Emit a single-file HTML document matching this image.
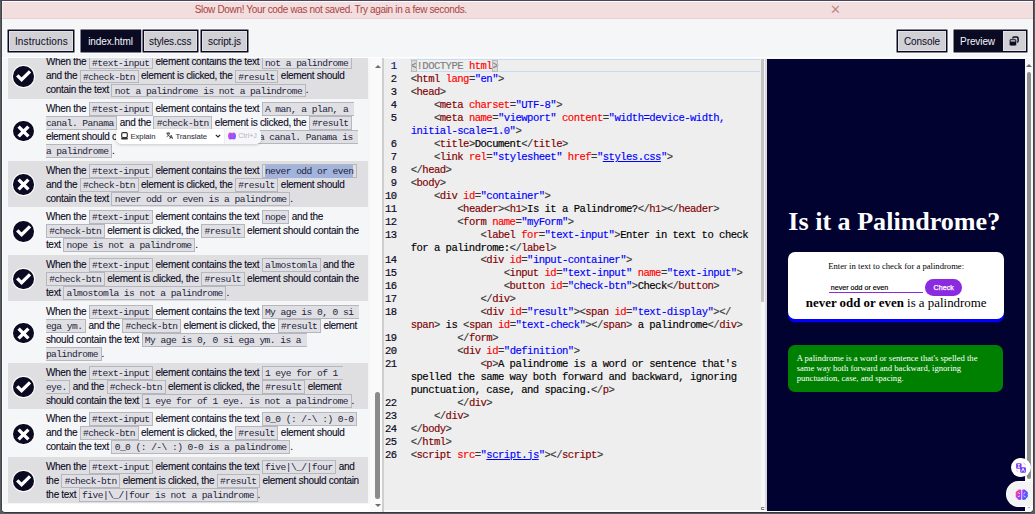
<!DOCTYPE html>
<html><head><meta charset="utf-8">
<style>
*{box-sizing:border-box;margin:0;padding:0}
html,body{width:1035px;height:514px;overflow:hidden;background:#585b61}
body{position:relative;font-family:"Liberation Sans",sans-serif;color:#0a0a23}
#app{position:absolute;left:2px;top:1px;width:1030.7px;height:510.5px;background:#f5f6f7;overflow:hidden;border-radius:0 0 4px 4px;box-shadow:-0.8px 0 0 #3a3c41,0.8px 0 0 #3a3c41,0 1px 0 #36373c}
#topf{position:absolute;left:0;top:0;width:1035px;height:1px;background:#4e435a}
#banner{position:absolute;left:0;top:0;width:1031px;height:18px;background:#f2dede;border-top:1px solid #fff;border-left:1.5px solid #f6ede8;border-bottom:1px solid #ead0d0}
#banner .msg{position:absolute;left:191.7px;top:2.3px;font-size:10px;letter-spacing:-0.34px;color:#a94442;white-space:nowrap}
#banner .x{position:absolute;left:827px;top:0px;font-size:13px;color:#c08a8a}
.btn{position:absolute;top:29.3px;height:22.1px;border:1px solid #0a0a23;box-shadow:0 0 0 0.5px #0a0a23,0 0 0 1.5px #fff,inset 0 0 0 1px #e2e2e6;background:#d0d0d5;color:#0a0a23;font-size:10px;letter-spacing:-0.1px;text-align:center;line-height:22px;white-space:nowrap}
.pvi{position:absolute;left:48px;top:0;width:23.3px;height:20.1px;background:#d0d0d5;box-shadow:inset 0 0 0 1px #e2e2e6}
.btn.dark{background:#0a0a23;color:#f5f6f7;box-shadow:0 0 0 0.5px #0a0a23,0 0 0 1.5px #fff}
#left{position:absolute;left:0;top:56px;width:380px;height:455px;background:#f5f6f7;overflow:hidden}
#list{position:absolute;left:0;top:1.2px;width:368px;height:450px;overflow:hidden}
.row{position:absolute;left:5.6px;width:360.3px;font-size:10px;line-height:14px;letter-spacing:-0.3px;white-space:nowrap;-webkit-text-stroke:0.1px #0a0a23}
code{-webkit-text-stroke:0 transparent}
.row.g{background:#dfdfe2}
.ln{position:absolute;left:38.3px;height:14px;margin-top:0.6px}
.ic{position:absolute;left:5.7px;margin-top:1.2px;width:20.5px;height:20.5px;border-radius:50%;background:#0a0a23;box-shadow:0 0 0 1px #fff}
.ic svg{position:absolute;left:0;top:0}
code{font-family:"Liberation Mono",monospace;font-size:9.6px;letter-spacing:-0.55px;background:#e0e0e4;border:1px solid #b6b6be;padding:0.8px 2.6px 0 2.3px;color:#23233a}
code.o{border-right:0;padding-right:5.6px}
code.m{border-left:0;padding-left:0}
.sel{background:#a2b4dc;padding:1px 0 1px 0}
#lsb{position:absolute;left:368px;top:57px;width:12px;height:454px;background:#fafafa}
#lsb .up{position:absolute;left:4.5px;top:7px;width:0;height:0;border-left:3px solid transparent;border-right:3px solid transparent;border-bottom:3.5px solid #6d6d6d}
#lsb .dn{position:absolute;left:4.5px;top:445.5px;width:0;height:0;border-left:3px solid transparent;border-right:3px solid transparent;border-top:3.5px solid #6d6d6d}
#lsb .th{position:absolute;left:5px;top:334px;width:5px;height:107px;border-radius:3px;background:#8a8a8a}
#div1{position:absolute;left:379.8px;top:57px;width:2.2px;height:454px;background:#cfcfd2}
#editor{position:absolute;left:382px;top:57.5px;width:376.7px;height:451.6px;background:#eeeeee;overflow:hidden;font-family:"Liberation Mono",monospace;font-size:10.6px;letter-spacing:-0.54px}
.lnum{position:absolute;left:0;width:12.5px;text-align:right;height:12.94px;line-height:12.94px;margin-top:1.9px;color:#0a0a23;font-size:10.5px;letter-spacing:-0.6px;-webkit-text-stroke:0.2px currentColor}
.cl{position:absolute;left:26.7px;height:12.94px;line-height:12.94px;margin-top:1.9px;-webkit-text-stroke:0.15px currentColor;white-space:pre;color:#000}
#curline{position:absolute;left:26px;top:0.8px;width:350px;height:12.4px;border-top:1px solid #c6dcf2;border-bottom:1px solid #c6dcf2}
#rtrack{position:absolute;left:760px;top:57.5px;width:2.5px;height:453.5px;background:#f6f6f6}
#ruler{position:absolute;left:758.9px;top:57.5px;width:3px;height:243.2px;background:#c3c3c3}
#div2{position:absolute;left:762.5px;top:57.5px;width:2.5px;height:453.5px;background:#d9d9de}
.kd{color:#383838}.kt{color:#800000}.ka{color:#ff0000}.kv{color:#0000ff}.km{color:#808080}.kl{color:#0000ff;text-decoration:underline}
.kdt{color:#808080;background:#dcdcdc;outline:1px solid #b9b9b9;outline-offset:-1px}
#preview{position:absolute;left:765px;top:57.5px;width:258px;height:452.4px;background:#010230;overflow:hidden;font-family:"Liberation Serif",serif;color:#fff}
#preview h1{position:absolute;left:0;width:258.5px;top:148px;margin-left:-2px;text-align:center;font-size:26.1px;font-weight:bold;line-height:30px;white-space:nowrap}
#card{position:absolute;left:21.4px;top:193.6px;width:215.6px;height:66.7px;background:#fff;border-radius:7px;box-shadow:0 3.3px 0 #0000ff;color:#000}
#card .lbl{position:absolute;left:0;width:100%;top:9px;text-align:center;font-size:8.65px;white-space:nowrap}
#card .inp{position:absolute;left:41px;top:31px;width:93.4px;height:10.2px;border-bottom:1.6px solid #8a2be2;font-family:"Liberation Sans",sans-serif;font-size:7.13px;line-height:11.6px;-webkit-text-stroke:0.15px #000;padding-left:1.4px;white-space:nowrap}
#card .chk{position:absolute;left:136.7px;top:27.3px;width:37.3px;height:16.6px;border-radius:8.3px;background:#8a2be2;color:#fff;font-family:"Liberation Sans",sans-serif;font-size:7.2px;-webkit-text-stroke:0.25px #fff;line-height:17.2px;text-align:center}
#card .res{position:absolute;left:0;width:100%;top:43.2px;text-align:center;font-size:12.9px;line-height:16px;white-space:nowrap}
#def{position:absolute;left:21.2px;top:286.5px;width:215.1px;height:46.5px;background:#008000;border-radius:7px;font-size:8.6px;line-height:9.8px;padding:9.4px 0 0 8.5px;white-space:nowrap}
#psb{position:absolute;left:1023px;top:57.5px;width:8px;height:453.5px;background:#f7f7f7}
#psb .up{position:absolute;left:1px;top:5.9px;width:0;height:0;border-left:3px solid transparent;border-right:3px solid transparent;border-bottom:3.5px solid #6d6d6d}
#psb .th{position:absolute;left:1.6px;top:13.3px;width:4.2px;height:407.7px;border-radius:3px;background:#8f8f8f}
#psb .dn{position:absolute;left:1px;top:446px;width:0;height:0;border-left:3px solid transparent;border-right:3px solid transparent;border-top:3.5px solid #6d6d6d}
#tip{position:absolute;left:113.8px;top:127.6px;width:145px;height:15.1px;background:#fff;border-radius:5px;box-shadow:0 1px 3px rgba(0,0,0,0.18);font-family:"Liberation Sans",sans-serif;font-size:7.7px;color:#3a3a48;-webkit-text-stroke:0.1px #3a3a48;white-space:nowrap}
#tip .r{position:absolute;left:107.8px;top:0;width:37.2px;height:15.1px;background:#f7f7f9;border-radius:0 5px 5px 0;border-left:1px solid #eeeef2}
#tip span{position:absolute;top:0;line-height:15.6px}
#tip svg{position:absolute}
#pvicon{position:absolute;left:1000.4px;top:28.9px;width:24.7px;height:24px}
#tbtn{position:absolute;left:1009.1px;top:456.8px;width:19.6px;height:19px;border-radius:50%;background:#fff;box-shadow:0 0 2px rgba(0,0,0,0.25)}
#bbtn{position:absolute;left:1005.3px;top:481.4px;width:40px;height:23.5px;border-radius:11.75px 0 0 11.75px;background:#f3f3f5;box-shadow:0 0 0 1px #fff}
#lwhite{position:absolute;left:0;top:0;width:1.2px;height:455px;background:#fff}
#bwhite{position:absolute;left:0;top:447px;width:368px;height:10px;background:#fff}
#wline{position:absolute;left:0;top:55.6px;width:1031px;height:1.4px;background:#fff}
#ebot{position:absolute;left:382px;top:509.1px;width:383px;height:2px;background:#fbfbfb}
#cicon{position:absolute;left:759px;top:505.6px;width:3.6px;height:3.6px;border:1.1px solid #777;border-right-color:transparent;border-radius:50%}
</style></head>
<body>
<div id="topf"></div>
<div id="app">
  <div id="banner"><span class="msg">Slow Down! Your code was not saved. Try again in a few seconds.</span><span class="x">&#x2715;</span></div>
  <div class="btn" style="left:6.3px;width:66.2px;letter-spacing:0.15px">Instructions</div>
  <div class="btn dark" style="left:78.5px;width:60px">index.html</div>
  <div class="btn" style="left:140.8px;width:54.9px">styles.css</div>
  <div class="btn" style="left:198.7px;width:47.6px">script.js</div>
  <div class="btn" style="left:894.8px;width:50.4px">Console</div>
  <div class="btn dark" style="left:951.5px;width:73.3px;text-align:left;padding-left:5.6px"><div class="pvi"></div>Preview</div>
<div id="left"><div id="lwhite"></div><div id="bwhite"></div><div id="list">
<div class="row g" style="top:-5.9px;height:46.3px"><div class="ic" style="top:12.6px"><svg width="21" height="21" viewBox="0 0 21 21"><path d="M4.2 9.3 L8.6 13.7 L17 5.3" fill="none" stroke="#fff" stroke-width="3.3"/></svg></div>
<div class="ln" style="top:2.5px">When the <code>#text-input</code> element contains the text <code>not a palindrome</code></div>
<div class="ln" style="top:16.5px">and the <code>#check-btn</code> element is clicked, the <code>#result</code> element should</div>
<div class="ln" style="top:30.5px">contain the text <code>not a palindrome is not a palindrome</code>.</div>
</div>
<div class="row" style="top:41.0px;height:61.3px"><div class="ic" style="top:20.2px"><svg width="21" height="21" viewBox="0 0 21 21"><path d="M5.6 5.6 L15.4 15.4 M15.4 5.6 L5.6 15.4" fill="none" stroke="#fff" stroke-width="3.4"/></svg></div>
<div class="ln" style="top:2.5px">When the <code>#test-input</code> element contains the text <code class="o">A man, a plan, a</code></div>
<div class="ln" style="top:16.5px"><code class="m">canal. Panama</code> and the <code>#check-btn</code> element is clicked, the <code>#result</code></div>
<div class="ln" style="top:30.5px">element should contain the text <code class="o">A man, a plan, a canal. Panama is</code></div>
<div class="ln" style="top:44.5px"><code class="m">a palindrome</code>.</div>
</div>
<div class="row g" style="top:102.5px;height:46.2px"><div class="ic" style="top:12.6px"><svg width="21" height="21" viewBox="0 0 21 21"><path d="M5.6 5.6 L15.4 15.4 M15.4 5.6 L5.6 15.4" fill="none" stroke="#fff" stroke-width="3.4"/></svg></div>
<div class="ln" style="top:2.5px">When the <code>#text-input</code> element contains the text <code><span class="sel">never odd or even</span></code></div>
<div class="ln" style="top:16.5px">and the <code>#check-btn</code> element is clicked, the <code>#result</code> element should</div>
<div class="ln" style="top:30.5px">contain the text <code>never odd or even is a palindrome</code>.</div>
</div>
<div class="row" style="top:148.7px;height:47.9px"><div class="ic" style="top:13.4px"><svg width="21" height="21" viewBox="0 0 21 21"><path d="M4.2 9.3 L8.6 13.7 L17 5.3" fill="none" stroke="#fff" stroke-width="3.3"/></svg></div>
<div class="ln" style="top:2.5px">When the <code>#text-input</code> element contains the text <code>nope</code> and the</div>
<div class="ln" style="top:16.5px"><code>#check-btn</code> element is clicked, the <code>#result</code> element should contain the</div>
<div class="ln" style="top:30.5px">text <code>nope is not a palindrome</code>.</div>
</div>
<div class="row g" style="top:196.6px;height:46.6px"><div class="ic" style="top:12.8px"><svg width="21" height="21" viewBox="0 0 21 21"><path d="M4.2 9.3 L8.6 13.7 L17 5.3" fill="none" stroke="#fff" stroke-width="3.3"/></svg></div>
<div class="ln" style="top:2.5px">When the <code>#text-input</code> element contains the text <code>almostomla</code> and the</div>
<div class="ln" style="top:16.5px"><code>#check-btn</code> element is clicked, the <code>#result</code> element should contain the</div>
<div class="ln" style="top:30.5px">text <code>almostomla is not a palindrome</code>.</div>
</div>
<div class="row" style="top:243.5px;height:61.2px"><div class="ic" style="top:20.1px"><svg width="21" height="21" viewBox="0 0 21 21"><path d="M5.6 5.6 L15.4 15.4 M15.4 5.6 L5.6 15.4" fill="none" stroke="#fff" stroke-width="3.4"/></svg></div>
<div class="ln" style="top:2.5px">When the <code>#text-input</code> element contains the text <code class="o">My age is 0, 0 si</code></div>
<div class="ln" style="top:16.5px"><code class="m">ega ym.</code> and the <code>#check-btn</code> element is clicked, the <code>#result</code> element</div>
<div class="ln" style="top:30.5px">should contain the text <code class="o">My age is 0, 0 si ega ym. is a</code></div>
<div class="ln" style="top:44.5px"><code class="m">palindrome</code>.</div>
</div>
<div class="row g" style="top:304.7px;height:46.1px"><div class="ic" style="top:12.5px"><svg width="21" height="21" viewBox="0 0 21 21"><path d="M4.2 9.3 L8.6 13.7 L17 5.3" fill="none" stroke="#fff" stroke-width="3.3"/></svg></div>
<div class="ln" style="top:2.5px">When the <code>#text-input</code> element contains the text <code class="o">1 eye for of 1</code></div>
<div class="ln" style="top:16.5px"><code class="m">eye.</code> and the <code>#check-btn</code> element is clicked, the <code>#result</code> element</div>
<div class="ln" style="top:30.5px">should contain the text <code>1 eye for of 1 eye. is not a palindrome</code>.</div>
</div>
<div class="row" style="top:350.8px;height:48.1px"><div class="ic" style="top:13.6px"><svg width="21" height="21" viewBox="0 0 21 21"><path d="M5.6 5.6 L15.4 15.4 M15.4 5.6 L5.6 15.4" fill="none" stroke="#fff" stroke-width="3.4"/></svg></div>
<div class="ln" style="top:2.5px">When the <code>#text-input</code> element contains the text <code>0_0 (: /-&#92; :) 0-0</code></div>
<div class="ln" style="top:16.5px">and the <code>#check-btn</code> element is clicked, the <code>#result</code> element should</div>
<div class="ln" style="top:30.5px">contain the text <code>0_0 (: /-&#92; :) 0-0 is a palindrome</code>.</div>
</div>
<div class="row g" style="top:398.9px;height:46.2px"><div class="ic" style="top:12.6px"><svg width="21" height="21" viewBox="0 0 21 21"><path d="M4.2 9.3 L8.6 13.7 L17 5.3" fill="none" stroke="#fff" stroke-width="3.3"/></svg></div>
<div class="ln" style="top:2.5px">When the <code>#text-input</code> element contains the text <code>five|&#92;_/|four</code> and</div>
<div class="ln" style="top:16.5px">the <code>#check-btn</code> element is clicked, the <code>#result</code> element should contain</div>
<div class="ln" style="top:30.5px">the text <code>five|&#92;_/|four is not a palindrome</code>.</div>
</div>
</div></div>
<div id="lsb"><div class="up"></div><div class="th"></div><div class="dn"></div></div><div id="div1"></div>
<div id="editor"><div id="curline"></div><div class="lnum" style="top:0.00px;color:#0b216f">1</div><div class="cl" style="top:0.00px"><span class="kdt">&lt;</span><span class="km">!DOCTYPE </span><span class="ka">html</span><span class="kdt">&gt;</span></div>
<div class="lnum" style="top:12.94px">2</div><div class="cl" style="top:12.94px"><span class="kd">&lt;</span><span class="kt">html</span> <span class="ka">lang</span><span class="kd">=</span><span class="kv">"en"</span><span class="kd">&gt;</span></div>
<div class="lnum" style="top:25.88px">3</div><div class="cl" style="top:25.88px"><span class="kd">&lt;</span><span class="kt">head</span><span class="kd">&gt;</span></div>
<div class="lnum" style="top:38.82px">4</div><div class="cl" style="top:38.82px">    <span class="kd">&lt;</span><span class="kt">meta</span> <span class="ka">charset</span><span class="kd">=</span><span class="kv">"UTF-8"</span><span class="kd">&gt;</span></div>
<div class="lnum" style="top:51.76px">5</div><div class="cl" style="top:51.76px">    <span class="kd">&lt;</span><span class="kt">meta</span> <span class="ka">name</span><span class="kd">=</span><span class="kv">"viewport"</span> <span class="ka">content</span><span class="kd">=</span><span class="kv">"width=device-width,</span></div>
<div class="cl" style="top:64.70px"><span class="kv">initial-scale=1.0"</span><span class="kd">&gt;</span></div>
<div class="lnum" style="top:77.64px">6</div><div class="cl" style="top:77.64px">    <span class="kd">&lt;</span><span class="kt">title</span><span class="kd">&gt;</span>Document<span class="kd">&lt;/</span><span class="kt">title</span><span class="kd">&gt;</span></div>
<div class="lnum" style="top:90.58px">7</div><div class="cl" style="top:90.58px">    <span class="kd">&lt;</span><span class="kt">link</span> <span class="ka">rel</span><span class="kd">=</span><span class="kv">"stylesheet"</span> <span class="ka">href</span><span class="kd">=</span><span class="kv">"</span><span class="kl">styles.css</span><span class="kv">"</span><span class="kd">&gt;</span></div>
<div class="lnum" style="top:103.52px">8</div><div class="cl" style="top:103.52px"><span class="kd">&lt;/</span><span class="kt">head</span><span class="kd">&gt;</span></div>
<div class="lnum" style="top:116.46px">9</div><div class="cl" style="top:116.46px"><span class="kd">&lt;</span><span class="kt">body</span><span class="kd">&gt;</span></div>
<div class="lnum" style="top:129.40px">10</div><div class="cl" style="top:129.40px">    <span class="kd">&lt;</span><span class="kt">div</span> <span class="ka">id</span><span class="kd">=</span><span class="kv">"container"</span><span class="kd">&gt;</span></div>
<div class="lnum" style="top:142.34px">11</div><div class="cl" style="top:142.34px">        <span class="kd">&lt;</span><span class="kt">header</span><span class="kd">&gt;</span><span class="kd">&lt;</span><span class="kt">h1</span><span class="kd">&gt;</span>Is it a Palindrome?<span class="kd">&lt;/</span><span class="kt">h1</span><span class="kd">&gt;</span><span class="kd">&lt;/</span><span class="kt">header</span><span class="kd">&gt;</span></div>
<div class="lnum" style="top:155.28px">12</div><div class="cl" style="top:155.28px">        <span class="kd">&lt;</span><span class="kt">form</span> <span class="ka">name</span><span class="kd">=</span><span class="kv">"myForm"</span><span class="kd">&gt;</span></div>
<div class="lnum" style="top:168.22px">13</div><div class="cl" style="top:168.22px">            <span class="kd">&lt;</span><span class="kt">label</span> <span class="ka">for</span><span class="kd">=</span><span class="kv">"text-input"</span><span class="kd">&gt;</span>Enter in text to check</div>
<div class="cl" style="top:181.16px">for a palindrome:<span class="kd">&lt;/</span><span class="kt">label</span><span class="kd">&gt;</span></div>
<div class="lnum" style="top:194.10px">14</div><div class="cl" style="top:194.10px">            <span class="kd">&lt;</span><span class="kt">div</span> <span class="ka">id</span><span class="kd">=</span><span class="kv">"input-container"</span><span class="kd">&gt;</span></div>
<div class="lnum" style="top:207.04px">15</div><div class="cl" style="top:207.04px">                <span class="kd">&lt;</span><span class="kt">input</span> <span class="ka">id</span><span class="kd">=</span><span class="kv">"text-input"</span> <span class="ka">name</span><span class="kd">=</span><span class="kv">"text-input"</span><span class="kd">&gt;</span></div>
<div class="lnum" style="top:219.98px">16</div><div class="cl" style="top:219.98px">                <span class="kd">&lt;</span><span class="kt">button</span> <span class="ka">id</span><span class="kd">=</span><span class="kv">"check-btn"</span><span class="kd">&gt;</span>Check<span class="kd">&lt;/</span><span class="kt">button</span><span class="kd">&gt;</span></div>
<div class="lnum" style="top:232.92px">17</div><div class="cl" style="top:232.92px">            <span class="kd">&lt;/</span><span class="kt">div</span><span class="kd">&gt;</span></div>
<div class="lnum" style="top:245.86px">18</div><div class="cl" style="top:245.86px">            <span class="kd">&lt;</span><span class="kt">div</span> <span class="ka">id</span><span class="kd">=</span><span class="kv">"result"</span><span class="kd">&gt;</span><span class="kd">&lt;</span><span class="kt">span</span> <span class="ka">id</span><span class="kd">=</span><span class="kv">"text-display"</span><span class="kd">&gt;</span><span class="kd">&lt;/</span></div>
<div class="cl" style="top:258.80px"><span class="kt">span</span><span class="kd">&gt;</span> is <span class="kd">&lt;</span><span class="kt">span</span> <span class="ka">id</span><span class="kd">=</span><span class="kv">"text-check"</span><span class="kd">&gt;&lt;/</span><span class="kt">span</span><span class="kd">&gt;</span> a palindrome<span class="kd">&lt;/</span><span class="kt">div</span><span class="kd">&gt;</span></div>
<div class="lnum" style="top:271.74px">19</div><div class="cl" style="top:271.74px">        <span class="kd">&lt;/</span><span class="kt">form</span><span class="kd">&gt;</span></div>
<div class="lnum" style="top:284.68px">20</div><div class="cl" style="top:284.68px">        <span class="kd">&lt;</span><span class="kt">div</span> <span class="ka">id</span><span class="kd">=</span><span class="kv">"definition"</span><span class="kd">&gt;</span></div>
<div class="lnum" style="top:297.62px">21</div><div class="cl" style="top:297.62px">            <span class="kd">&lt;</span><span class="kt">p</span><span class="kd">&gt;</span>A palindrome is a word or sentence that's</div>
<div class="cl" style="top:310.56px">spelled the same way both forward and backward, ignoring</div>
<div class="cl" style="top:323.50px">punctuation, case, and spacing.<span class="kd">&lt;/</span><span class="kt">p</span><span class="kd">&gt;</span></div>
<div class="lnum" style="top:336.44px">22</div><div class="cl" style="top:336.44px">        <span class="kd">&lt;/</span><span class="kt">div</span><span class="kd">&gt;</span></div>
<div class="lnum" style="top:349.38px">23</div><div class="cl" style="top:349.38px">    <span class="kd">&lt;/</span><span class="kt">div</span><span class="kd">&gt;</span></div>
<div class="lnum" style="top:362.32px">24</div><div class="cl" style="top:362.32px"><span class="kd">&lt;/</span><span class="kt">body</span><span class="kd">&gt;</span></div>
<div class="lnum" style="top:375.26px">25</div><div class="cl" style="top:375.26px"><span class="kd">&lt;/</span><span class="kt">html</span><span class="kd">&gt;</span></div>
<div class="lnum" style="top:388.20px">26</div><div class="cl" style="top:388.20px"><span class="kd">&lt;</span><span class="kt">script</span> <span class="ka">src</span><span class="kd">=</span><span class="kv">"</span><span class="kl">script.js</span><span class="kv">"</span><span class="kd">&gt;&lt;/</span><span class="kt">script</span><span class="kd">&gt;</span></div></div><div id="rtrack"></div><div id="ruler"></div><div id="div2"></div>
<div id="preview">
<h1>Is it a Palindrome?</h1>
<div id="card"><div class="lbl">Enter in text to check for a palindrome:</div><div class="inp">never odd or even</div><div class="chk">Check</div><div class="res"><b>never odd or even</b> is a palindrome</div></div>
<div id="def">A palindrome is a word or sentence that's spelled the<br>same way both forward and backward, ignoring<br>punctuation, case, and spacing.</div>
</div>
<div id="psb"><div class="up"></div><div class="th"></div><div class="dn"></div></div>
<div id="wline"></div><div id="ebot"></div><div id="cicon"></div>
<div id="tip"><div class="r"></div>
<svg style="left:5px;top:3.6px" width="7" height="8" viewBox="0 0 7 8"><rect x="0.7" y="0.7" width="5.6" height="4.8" rx="1.2" fill="none" stroke="#333" stroke-width="1.2"/><rect x="0.2" y="5.6" width="6.6" height="1.8" rx="0.6" fill="#333"/></svg>
<span style="left:14.6px">Explain</span>
<svg style="left:50.5px;top:3.8px" width="7" height="7" viewBox="0 0 7 7"><path d="M0.5 1.2 H4 M2.2 0.3 V1.2 M1 1.2 C1.5 3 2.6 4 4 4.6 M3.5 1.2 C3 3 2 4 0.6 4.8" fill="none" stroke="#333" stroke-width="0.9"/><path d="M3.8 6.8 L5.2 3.2 L6.6 6.8 M4.3 5.6 H6.1" fill="none" stroke="#333" stroke-width="0.9"/></svg>
<span style="left:59.6px">Translate</span>
<svg style="left:98.8px;top:5.8px" width="6" height="4" viewBox="0 0 6 4"><path d="M0.8 0.8 L3 3 L5.2 0.8" fill="none" stroke="#222" stroke-width="1.1"/></svg>
<svg style="left:112.6px;top:3.6px" width="8" height="8" viewBox="0 0 8 8"><defs><linearGradient id="bg1" x1="0" y1="0" x2="1" y2="0.6"><stop offset="0" stop-color="#ff3d7f"/><stop offset="0.5" stop-color="#b04dff"/><stop offset="1" stop-color="#5a5cff"/></linearGradient></defs><ellipse cx="2.4" cy="4" rx="2.3" ry="3.6" fill="url(#bg1)"/><ellipse cx="5.6" cy="4" rx="2.3" ry="3.6" fill="url(#bg1)"/></svg>
<span style="left:122.4px;color:#b3b3bd;-webkit-text-stroke:0;font-size:7.1px">Ctrl+J</span>
</div>
<div id="pvicon"><svg width="25" height="24" viewBox="0 0 25 24"><rect x="10.8" y="7" width="5.3" height="5.3" rx="1.4" fill="none" stroke="#0a0a23" stroke-width="1.5"/><rect x="7.2" y="8.8" width="7.5" height="7.2" rx="1.7" fill="#0a0a23" stroke="#d0d0d5" stroke-width="0.8"/><rect x="8.6" y="10.3" width="4.7" height="1.2" fill="#e8e8ee"/></svg></div>
<div id="tbtn"><svg width="20" height="19" viewBox="0 0 20 19"><rect x="5.1" y="5.2" width="5.4" height="5.5" rx="1" fill="#7d3cf0"/><path d="M6.6 6.6 H9 M7.8 6.6 V9.3 M6.6 9.3 H9" stroke="#fff" stroke-width="0.8"/><rect x="9.2" y="9.2" width="5.7" height="5.5" rx="1" fill="#6f3ef2"/><path d="M10.6 13.6 L12.05 10.4 L13.5 13.6" fill="none" stroke="#fff" stroke-width="0.9"/><path d="M12.4 4.8 L14.6 6.8 M5.2 12 L7.4 14" stroke="#a99cf0" stroke-width="0.7"/></svg></div>
<div id="bbtn"><svg style="position:absolute;left:7.3px;top:6.8px" width="13.5" height="11.6" viewBox="0 0 13.5 11.6"><defs><linearGradient id="bg2" x1="0" y1="0" x2="1" y2="0.5"><stop offset="0" stop-color="#ff6a2a"/><stop offset="0.25" stop-color="#f03fb0"/><stop offset="0.5" stop-color="#9b3cff"/><stop offset="1" stop-color="#3f5cff"/></linearGradient></defs><path d="M6.3 0.9 C4.6 -0.1 2.7 0.5 2.2 2.1 C0.7 2.6 0.2 4.3 0.9 5.6 C0.2 6.9 0.7 8.6 2.1 9.1 C2.6 10.9 4.6 11.6 6.3 10.6 Z M7.2 0.9 C8.9 -0.1 10.8 0.5 11.3 2.1 C12.8 2.6 13.3 4.3 12.6 5.6 C13.3 6.9 12.8 8.6 11.4 9.1 C10.9 10.9 8.9 11.6 7.2 10.6 Z" fill="url(#bg2)"/><path d="M3.2 3.6 L5 4.8 M3 7.8 L5 6.8 M10.3 3.6 L8.5 4.8 M10.5 7.8 L8.5 6.8" stroke="#f3e9ff" stroke-width="0.9"/></svg></div>
</div>
</body></html>
